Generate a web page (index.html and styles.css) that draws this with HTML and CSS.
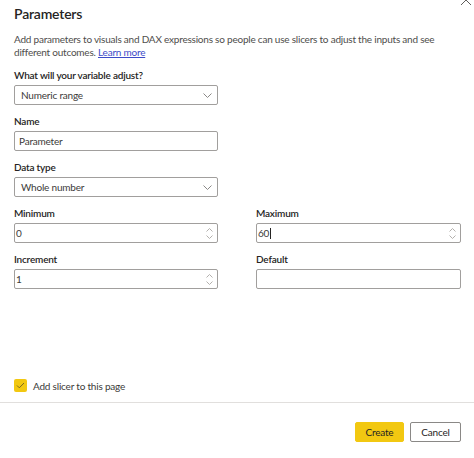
FILE: index.html
```html
<!DOCTYPE html>
<html lang="en">
<head>
<meta charset="utf-8">
<title>Parameters</title>
<link rel="stylesheet" href="styles.css">
</head>
<body>
<div class="dialog">
  <svg class="close" width="12" height="12" viewBox="0 0 12 12" aria-hidden="true">
    <path d="M1 1 L11 11 M11 1 L1 11" stroke="#605e5c" stroke-width="1" fill="none"/>
  </svg>
  <h1 class="title">Parameters</h1>
  <p class="desc"><span class="desc-line">Add parameters to visuals and DAX expressions so people can use slicers to adjust the inputs and see</span> <span class="desc-line">different outcomes. <a class="link" href="#">Learn more</a></span></p>

  <div class="fields">
    <div class="field">
      <div class="label">What will your variable adjust?</div>
      <div class="box select"><span>Numeric range</span>
        <svg class="chev" width="9" height="5" viewBox="0 0 9 5"><path d="M0.5 0.5 L4.5 4.5 L8.5 0.5" stroke="#8a8886" fill="none"/></svg>
      </div>
    </div>
    <div class="field">
      <div class="label">Name</div>
      <div class="box text"><span>Parameter</span></div>
    </div>
    <div class="field">
      <div class="label">Data type</div>
      <div class="box select"><span>Whole number</span>
        <svg class="chev" width="9" height="5" viewBox="0 0 9 5"><path d="M0.5 0.5 L4.5 4.5 L8.5 0.5" stroke="#8a8886" fill="none"/></svg>
      </div>
    </div>

    <div class="grid">
      <div class="field wide">
        <div class="label">Minimum</div>
        <div class="box num"><span>0</span>
          <span class="spin">
            <svg width="7" height="4" viewBox="0 0 7 4"><path d="M0.5 3.5 L3.5 0.5 L6.5 3.5" stroke="#b3b0ad" fill="none"/></svg>
            <svg width="7" height="4" viewBox="0 0 7 4"><path d="M0.5 0.5 L3.5 3.5 L6.5 0.5" stroke="#b3b0ad" fill="none"/></svg>
          </span>
        </div>
      </div>
      <div class="field wide">
        <div class="label">Maximum</div>
        <div class="box num focus"><span>60<span class="caret"></span></span>
          <span class="spin">
            <svg width="7" height="4" viewBox="0 0 7 4"><path d="M0.5 3.5 L3.5 0.5 L6.5 3.5" stroke="#b3b0ad" fill="none"/></svg>
            <svg width="7" height="4" viewBox="0 0 7 4"><path d="M0.5 0.5 L3.5 3.5 L6.5 0.5" stroke="#b3b0ad" fill="none"/></svg>
          </span>
        </div>
      </div>
      <div class="field wide">
        <div class="label">Increment</div>
        <div class="box num"><span>1</span>
          <span class="spin">
            <svg width="7" height="4" viewBox="0 0 7 4"><path d="M0.5 3.5 L3.5 0.5 L6.5 3.5" stroke="#b3b0ad" fill="none"/></svg>
            <svg width="7" height="4" viewBox="0 0 7 4"><path d="M0.5 0.5 L3.5 3.5 L6.5 0.5" stroke="#b3b0ad" fill="none"/></svg>
          </span>
        </div>
      </div>
      <div class="field wide">
        <div class="label">Default</div>
        <div class="box num"><span></span></div>
      </div>
    </div>
  </div>

  <div class="slicer">
    <span class="check">
      <svg width="9" height="7" viewBox="0 0 9 7"><path d="M1 3.5 L3.3 5.8 L8 1" stroke="#7a6820" stroke-width="1" fill="none"/></svg>
    </span>
    <span class="slicer-text">Add slicer to this page</span>
  </div>
  <div class="divider"></div>
  <div class="footer">
    <button class="btn primary" type="button">Create</button>
    <button class="btn secondary" type="button">Cancel</button>
  </div>
</div>
</body>
</html>
```

FILE: styles.css
```css
html, body {
  margin: 0;
  padding: 0;
  background: #ffffff;
}

body {
  font-family: Lato, "Open Sans", "DejaVu Sans", sans-serif;
  color: #252423;
  letter-spacing: -0.2px;
}

.dialog {
  position: relative;
  height: 458px;
  box-sizing: border-box;
  padding: 4px 13px 0 14px;
  display: flex;
  flex-direction: column;
  overflow: hidden;
}

.close {
  position: absolute;
  top: -6px;
  right: 2px;
}

.title {
  margin: 0;
  font-size: 14px;
  font-weight: 600;
  line-height: 20px;
  color: #252423;
}

.desc {
  margin: 9px 0 0;
  display: flex;
  flex-direction: column;
  font-size: 10px;
  letter-spacing: -0.22px;
  color: #4e4d4b;
}

.desc-line {
  display: block;
  height: 13px;
  line-height: 13px;
  white-space: nowrap;
}

.link {
  color: #3c4bc8;
  text-decoration: underline;
}

.fields {
  margin-top: 9px;
  display: flex;
  flex-direction: column;
  gap: 9px;
}

.field {
  display: flex;
  flex-direction: column;
  gap: 3px;
  width: 204px;
}

.field.wide {
  width: auto;
}

.label {
  font-size: 10px;
  font-weight: 600;
  line-height: 14px;
  color: #252423;
}

.box {
  height: 20px;
  box-sizing: border-box;
  border: 1px solid #a19f9d;
  border-radius: 2px;
  display: flex;
  align-items: center;
  justify-content: space-between;
  font-size: 10px;
  color: #3b3a39;
  background: #fff;
}

.select {
  padding: 0 5px 0 6px;
}

.text {
  padding: 0 4px;
}

.num {
  padding: 0 4px 0 1px;
}

.chev {
  display: block;
}

.spin {
  display: flex;
  flex-direction: column;
  gap: 3px;
}

.spin svg {
  display: block;
}

.caret {
  display: inline-block;
  width: 1px;
  height: 11px;
  margin-left: 1px;
  background: #252423;
  vertical-align: -2px;
}

.grid {
  display: grid;
  grid-template-columns: 204px 205px;
  column-gap: 38px;
  row-gap: 9px;
}

.slicer {
  margin-top: auto;
  display: flex;
  align-items: center;
  gap: 6px;
  height: 13px;
  margin-bottom: 10px;
}

.check {
  width: 13px;
  height: 13px;
  border-radius: 2px;
  background: #f2c811;
  display: flex;
  align-items: center;
  justify-content: center;
}

.check svg {
  display: block;
}

.slicer-text {
  font-size: 10px;
  color: #3b3a39;
}

.divider {
  height: 1px;
  background: #e1dfdd;
  margin: 0 -13px 0 -14px;
}

.footer {
  display: flex;
  justify-content: flex-end;
  gap: 6px;
  padding: 19px 0 16px;
}

.btn {
  height: 20px;
  box-sizing: border-box;
  margin: 0;
  padding: 0;
  font-family: inherit;
  font-size: 10px;
  letter-spacing: -0.2px;
  color: #252423;
  border-radius: 2px;
  display: flex;
  align-items: center;
  justify-content: center;
}

.primary {
  width: 49px;
  background: #f2c811;
  border: 1px solid #f2c811;
}

.secondary {
  width: 51px;
  background: #ffffff;
  border: 1px solid #8a8886;
}
```
